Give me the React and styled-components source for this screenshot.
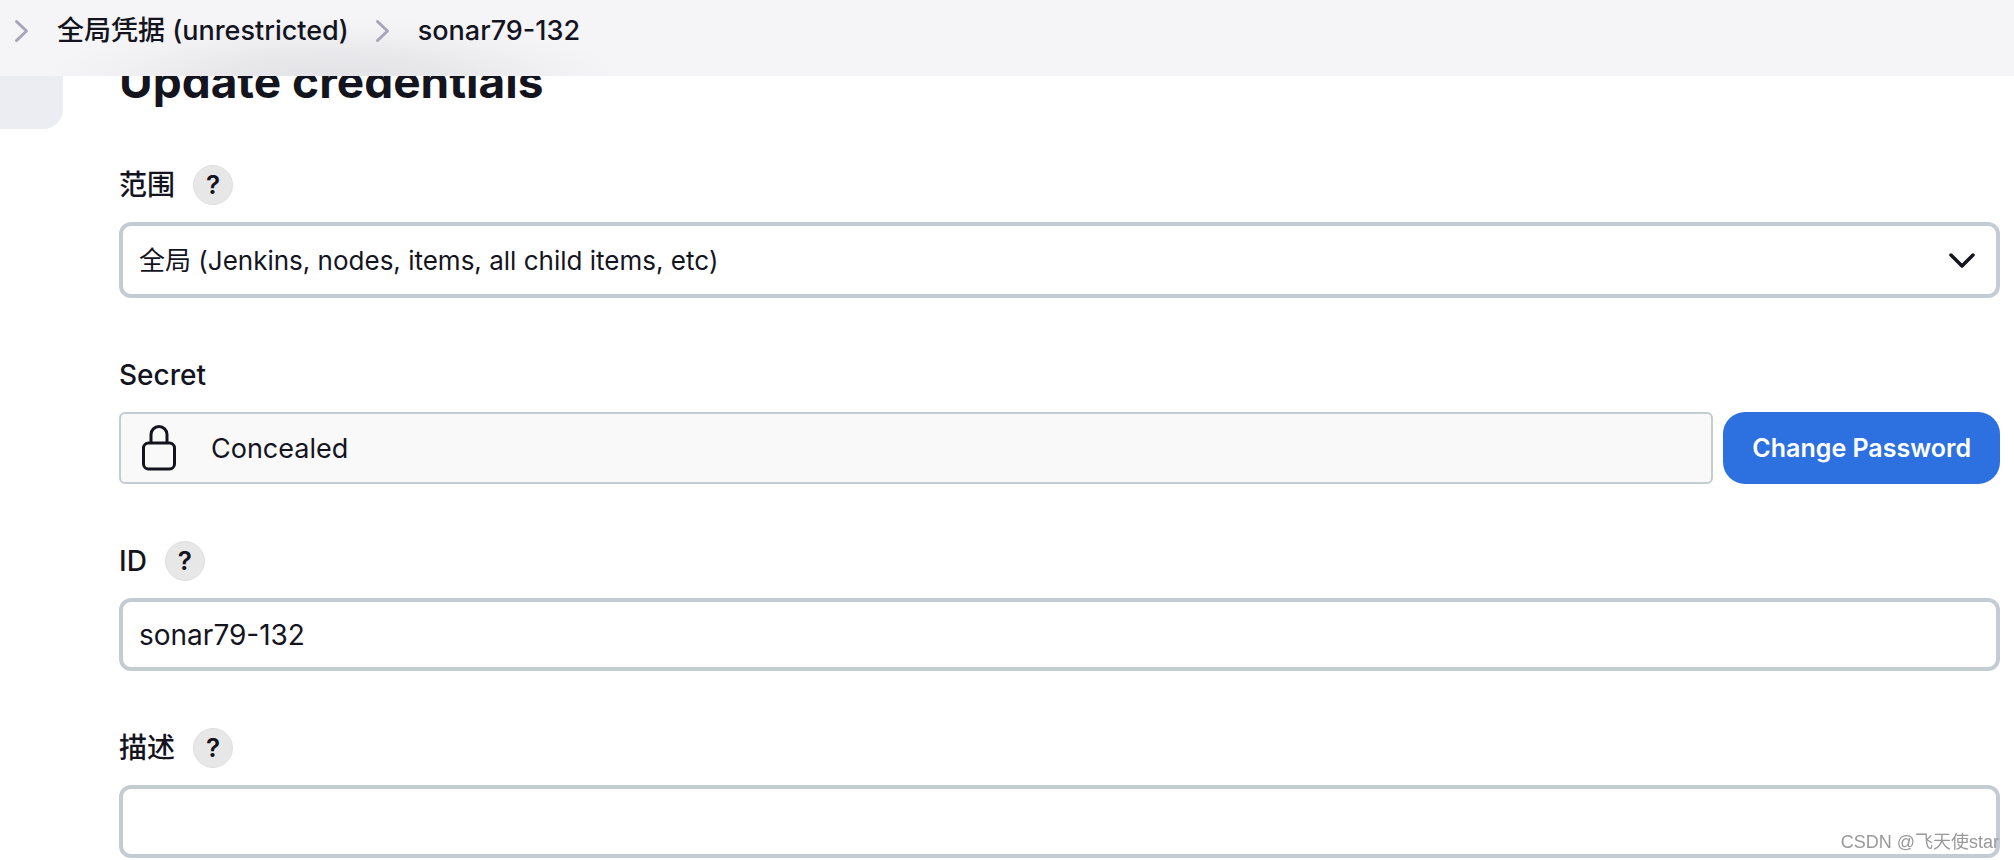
import React, { useState } from 'react'
import styled, { createGlobalStyle, ThemeProvider } from 'styled-components'

const theme = {
  fg: '#14141f',
  muted: '#a6a6b8',
  border: '#c3ccd1',
  brand: '#2d70df',
  brandDark: '#215fc6',
  bg: '#ffffff',
  panel: '#ebedf3',
  header: '#f5f5f8',
  concealed: '#f9f9f9',
}

const GlobalStyle = createGlobalStyle`
  *,
  *::before,
  *::after {
    box-sizing: border-box;
  }
  body {
    margin: 0;
    background-color: #ffffff;
    font-family: Inter, 'Noto Sans CJK SC', sans-serif;
    font-size: 27px;
  }
  button,
  input,
  select {
    font: inherit;
    color: inherit;
  }
`

const Page = styled.div`
  display: flex;
  align-items: flex-start;
  color: ${props => props.theme.fg};
`

const Breadcrumbs = styled.nav`
  position: fixed;
  top: 0;
  left: 0;
  right: 0;
  z-index: 1;
  height: 76px;
  padding: 11px 14px 0;
  color: ${props => props.theme.fg};
  background:
    radial-gradient(
      290px 62px at 335px 80px,
      rgba(20, 20, 31, 0.08),
      rgba(20, 20, 31, 0.06) 40%,
      rgba(20, 20, 31, 0.02) 75%,
      transparent
    ),
    ${props => props.theme.header};
`

const CrumbList = styled.ol`
  display: flex;
  align-items: center;
  gap: 26px;
  margin: 0;
  padding: 0;
  list-style: none;
`

const Crumb = styled.li`
  display: flex;
  align-items: center;
  gap: 28px;
  line-height: 40px;
  font-weight: 500;
`

const CrumbLink = styled.a`
  color: inherit;
  text-decoration: none;
`

const CrumbArrow = styled.svg`
  width: 15px;
  height: 24px;
  fill: none;
  stroke: ${props => props.theme.muted};
  stroke-width: 3;
  stroke-linecap: round;
  stroke-linejoin: round;
`

const SidePanel = styled.aside`
  flex: none;
  width: 63px;
  height: 129px;
  border-bottom-right-radius: 20px;
  background-color: ${props => props.theme.panel};
`

const Main = styled.main`
  flex: 1;
  min-width: 0;
  padding: 52px 14px 0 56px;
`

const Title = styled.h1`
  margin: 0 0 55px;
  font-size: 46px;
  line-height: 58px;
  font-weight: 700;
`

const Form = styled.form`
  display: flex;
  flex-direction: column;
  gap: 57px;
`

const Field = styled.div`
  display: flex;
  flex-direction: column;
  gap: 17px;
`

const LabelRow = styled.div`
  display: flex;
  align-items: center;
  gap: 18px;
  height: 40px;
`

const Label = styled.label`
  font-size: 28px;
  line-height: 40px;
  font-weight: 500;
`

const HelpButton = styled.button`
  width: 40px;
  height: 40px;
  padding: 0;
  border: 1px solid #e0e0e0;
  border-radius: 50%;
  background-color: #e7e7e7;
  font-size: 26px;
  line-height: 38px;
  font-weight: 600;
  cursor: pointer;
`

const TextInput = styled.input`
  width: 100%;
  height: 73px;
  padding: 0 16px;
  border: 4px solid ${props => props.theme.border};
  border-radius: 12px;
  background-color: ${props => props.theme.bg};
  font-size: 28px;
`

const SelectWrapper = styled.div`
  position: relative;
`

const Select = styled.select`
  appearance: none;
  display: block;
  width: 100%;
  height: 76px;
  padding: 0 70px 0 16px;
  border: 4px solid ${props => props.theme.border};
  border-radius: 12px;
  background-color: ${props => props.theme.bg};
  font-size: 26px;
`

const SelectArrow = styled.svg`
  position: absolute;
  top: 30px;
  right: 24px;
  width: 28px;
  height: 18px;
  fill: none;
  stroke: ${props => props.theme.fg};
  stroke-width: 3.5;
  stroke-linecap: round;
  stroke-linejoin: round;
  pointer-events: none;
`

const SecretRow = styled.div`
  display: flex;
  gap: 10px;
`

const Concealed = styled.div`
  flex: 1;
  display: flex;
  align-items: center;
  gap: 34px;
  height: 72px;
  padding: 0 20px;
  border: 2px solid ${props => props.theme.border};
  border-radius: 6px;
  background-color: ${props => props.theme.concealed};
`

const LockIcon = styled.svg`
  width: 36px;
  height: 48px;
  fill: none;
  stroke: ${props => props.theme.fg};
  stroke-width: 3;
`

const ChangeButton = styled.button`
  height: 72px;
  padding: 0 29px;
  border: none;
  border-radius: 22px;
  background-color: ${props => props.theme.brand};
  color: ${props => props.theme.bg};
  font-size: 25px;
  font-weight: 600;
  cursor: pointer;
  &:hover {
    background-color: ${props => props.theme.brandDark};
  }
`

const Watermark = styled.span`
  position: fixed;
  right: 15px;
  bottom: 4px;
  color: #999999;
  font-family: 'Liberation Sans', 'Noto Sans CJK SC', sans-serif;
  font-size: 18px;
  line-height: 28px;
  pointer-events: none;
`

const Help = ({ topic }) => (
  <HelpButton type="button" aria-label={`Help for ${topic}`}>
    ?
  </HelpButton>
)

const Arrow = () => (
  <CrumbArrow viewBox="0 0 15 24" aria-hidden="true">
    <path d="M2.5 2.5L12.5 12L2.5 21.5" />
  </CrumbArrow>
)

const App = () => {
  const [id, setId] = useState('sonar79-132')
  const [description, setDescription] = useState('')

  return (
    <ThemeProvider theme={theme}>
      <GlobalStyle />
      <Breadcrumbs aria-label="Breadcrumb">
        <CrumbList>
          <Crumb>
            <Arrow />
            <CrumbLink href="#domain">全局凭据 (unrestricted)</CrumbLink>
          </Crumb>
          <Crumb>
            <Arrow />
            <CrumbLink href="#credential">sonar79-132</CrumbLink>
          </Crumb>
        </CrumbList>
      </Breadcrumbs>
      <Page>
        <SidePanel />
        <Main>
          <Title>Update credentials</Title>
          <Form onSubmit={e => e.preventDefault()}>
            <Field>
              <LabelRow>
                <Label htmlFor="scope">范围</Label>
                <Help topic="范围" />
              </LabelRow>
              <SelectWrapper>
                <Select id="scope">
                  <option>全局 (Jenkins, nodes, items, all child items, etc)</option>
                </Select>
                <SelectArrow viewBox="0 0 28 18" aria-hidden="true">
                  <path d="M3 3L14 14L25 3" />
                </SelectArrow>
              </SelectWrapper>
            </Field>
            <Field>
              <LabelRow>
                <Label htmlFor="secret">Secret</Label>
              </LabelRow>
              <SecretRow>
                <Concealed>
                  <LockIcon viewBox="0 0 36 48" aria-hidden="true">
                    <rect x="2.5" y="19" width="31" height="26" rx="5" />
                    <path d="M10 19V10.5a8 8 0 0 1 16 0V19" />
                  </LockIcon>
                  <span>Concealed</span>
                </Concealed>
                <ChangeButton id="secret" type="button">
                  Change Password
                </ChangeButton>
              </SecretRow>
            </Field>
            <Field>
              <LabelRow>
                <Label htmlFor="id">ID</Label>
                <Help topic="ID" />
              </LabelRow>
              <TextInput id="id" type="text" value={id} onChange={e => setId(e.target.value)} />
            </Field>
            <Field>
              <LabelRow>
                <Label htmlFor="description">描述</Label>
                <Help topic="描述" />
              </LabelRow>
              <TextInput
                id="description"
                type="text"
                value={description}
                onChange={e => setDescription(e.target.value)}
              />
            </Field>
          </Form>
        </Main>
      </Page>
      <Watermark>CSDN @飞天使star</Watermark>
    </ThemeProvider>
  )
}

export default App
